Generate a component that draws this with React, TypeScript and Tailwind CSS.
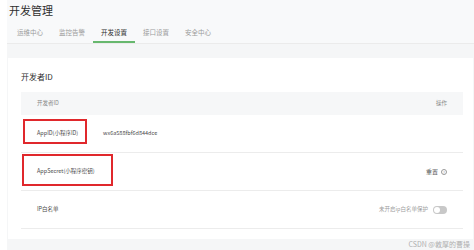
import React from "react"

const tabs = ["运维中心", "监控告警", "开发设置", "接口设置", "安全中心"]

function Toggle() {
  return (
    <span className="flex h-[8px] w-[14px] items-center rounded-full bg-[#c8c8c8] px-[1px]">
      <span className="h-[6px] w-[6px] rounded-full bg-white" />
    </span>
  )
}

function Row({ label, children, right, box }: { label: string, children?: React.ReactNode, right?: React.ReactNode, box?: string }) {
  return (
    <div className="relative flex h-[38px] items-center border-b border-[#ececec] pl-[16px] pr-[16px]">
      <span className="w-[66px] shrink-0 text-[5.5px] text-[#4a4a4a]">{label}</span>
      <span className="flex-1 text-[5.5px] text-[#4a4a4a]">{children}</span>
      {right}
      {/* red annotation boxes from the screenshot */}
      {box && <div className={`pointer-events-none absolute border-2 border-solid border-[#e0282c] ${box}`} />}
    </div>
  )
}

export default function App() {
  return (
    <div
      className="relative h-[250px] w-[474px] overflow-hidden bg-white"
      style={{ fontFamily: '"Noto Sans CJK SC", "Noto Sans", sans-serif' }}
    >
      <div className="ml-[7px] h-full bg-[#f5f6f7]">
        {/* header */}
        <div className="h-[44px] bg-[#f8f9fa] pt-[3px]">
          <h1 className="pl-[2px] text-[11px] leading-[14px] text-[#2e2e2e]">开发管理</h1>
          <div className="mt-[7px] flex h-[20px] border-b border-[#ebebeb] pl-[2px]">
            {tabs.map((t) => (
              <div
                key={t}
                className={`flex items-center px-[8px] text-[6.5px] ${t === "开发设置" ? "border-b-2 border-[#67b86e] text-[#2e2e2e]" : "border-b-2 border-transparent text-[#9b9b9b]"}`}
              >
                {t}
              </div>
            ))}
          </div>
        </div>

        {/* developer id card */}
        <div className="mx-[1px] mt-[14px] h-[181px] bg-white pl-[13px] pr-[10px] pt-[14px]">
          <h2 className="text-[8px] leading-[10px] text-[#2e2e2e]">开发者ID</h2>
          <div className="mt-[10px]">
            <div className="flex h-[23px] items-center justify-between bg-[#f6f7f8] px-[16px] text-[5.5px] text-[#8a8a8a]">
              <span>开发者ID</span>
              <span>操作</span>
            </div>
            <Row label="AppID(小程序ID)" box="left-[2px] top-[4px] h-[25px] w-[64px]">
              wx6a588fbf6d844dce
            </Row>
            <Row
              label="AppSecret(小程序密钥)"
              box="left-[1px] top-[1px] h-[32px] w-[91px]"
              right={
                <span className="flex items-center gap-[3px] text-[6px] text-[#555]">
                  重置
                  <span className="flex h-[6px] w-[6px] items-center justify-center rounded-full border-[0.6px] border-[#999] text-[4px] leading-none text-[#999]">?</span>
                </span>
              }
            />
            <Row
              label="IP白名单"
              right={
                <span className="flex items-center gap-[5px] text-[5.5px] text-[#a0a0a0]">
                  未开启ip白名单保护
                  <Toggle />
                </span>
              }
            />
          </div>
        </div>
      </div>

      <span className="absolute bottom-[1px] right-[4px] text-[7px] leading-[9px] text-[#aeaeae]">CSDN @敦厚的曹操</span>
    </div>
  )
}
